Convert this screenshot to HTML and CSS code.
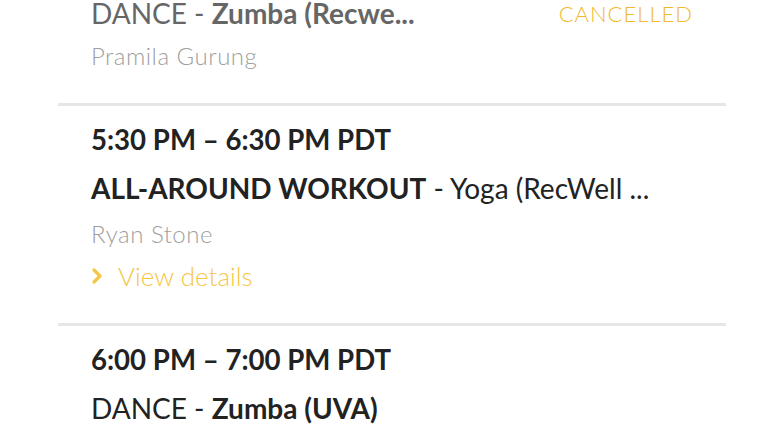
FILE: index.html
```html
<!DOCTYPE html>
<html lang="en">

<head>
    <meta charset="UTF-8">
    <meta name="viewport" content="width=device-width, initial-scale=1.0">
    <title>Class Schedule</title>
    <link rel="stylesheet" href="styles.css">
</head>

<body>
    <div class="schedule">

        <div class="session cancelled">
            <div class="session-head">
                <p class="title">DANCE - <b>Zumba (Recwe...</b></p>
                <span class="status">CANCELLED</span>
            </div>
            <p class="instructor">Pramila Gurung</p>
        </div>

        <div class="session">
            <p class="time">5:30 PM &ndash; 6:30 PM PDT</p>
            <p class="title"><b>ALL-AROUND WORKOUT</b> - Yoga (RecWell ...</p>
            <p class="instructor">Ryan Stone</p>
            <a class="details" href="#">
                <svg width="12" height="18" viewBox="0 0 12 18">
                    <path d="M3 3 L9 9 L3 15" fill="none" stroke="#f6c646" stroke-width="3.2" stroke-linecap="round" stroke-linejoin="round"/>
                </svg>
                View details
            </a>
        </div>

        <div class="session">
            <p class="time">6:00 PM &ndash; 7:00 PM PDT</p>
            <p class="title">DANCE - <b>Zumba (UVA)</b></p>
        </div>

    </div>
</body>

</html>
```

FILE: styles.css
```css
body {
    font-family: 'Lato', 'Liberation Sans', sans-serif;
    background-color: #fff;
    color: #222;
    margin: 0;
    padding: 0;
}

.schedule {
    margin: -21px 58px 0 58px;
}

.session {
    padding: 19px 33px 32px 33px;
    border-bottom: 3px solid #e6e6e6;
}

.session p {
    margin: 0;
    line-height: 30px;
}

.session-head {
    display: flex;
    justify-content: space-between;
    align-items: center;
}

.time {
    font-size: 27.6px;
    font-weight: 700;
}

.title {
    font-size: 28px;
    font-weight: 400;
    margin-top: 18px !important;
}

.title b {
    font-weight: 700;
}

.instructor {
    font-size: 24px;
    font-weight: 300;
    letter-spacing: 0.5px;
    color: #a0a0a0;
    margin-top: 16px !important;
}

.details {
    display: flex;
    align-items: center;
    gap: 15px;
    margin-top: 12px;
    line-height: 30px;
    font-size: 26px;
    font-weight: 300;
    color: #f6c646;
    text-decoration: none;
}

.cancelled .title {
    margin-top: 0 !important;
    color: #666;
}

.cancelled .instructor {
    margin-top: 13px !important;
}

.status {
    font-size: 22px;
    font-weight: 300;
    letter-spacing: 1px;
    color: #f2b92c;
}
```
